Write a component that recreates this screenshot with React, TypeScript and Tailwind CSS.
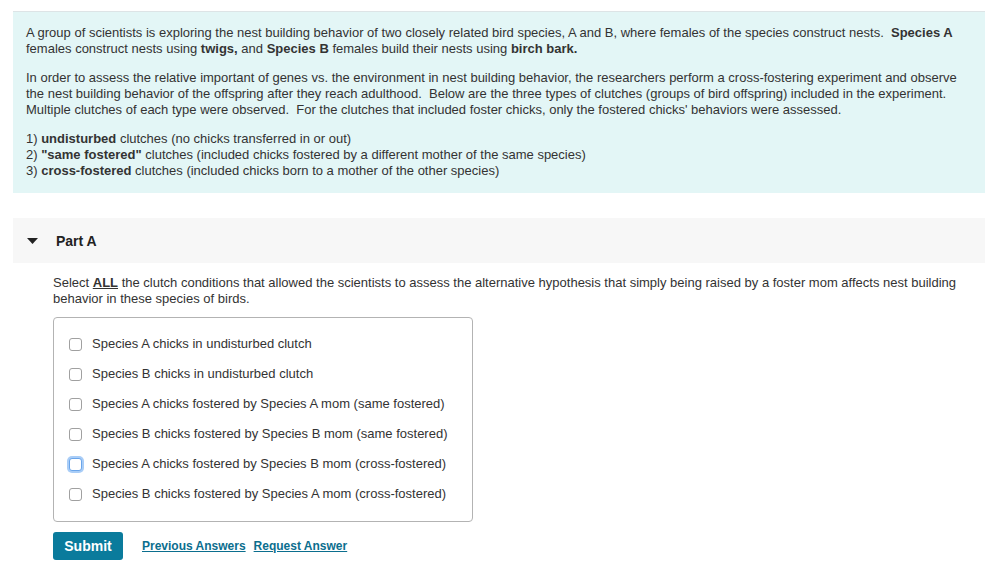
const OPTIONS = [
  'Species A chicks in undisturbed clutch',
  'Species B chicks in undisturbed clutch',
  'Species A chicks fostered by Species A mom (same fostered)',
  'Species B chicks fostered by Species B mom (same fostered)',
  'Species A chicks fostered by Species B mom (cross-fostered)',
  'Species B chicks fostered by Species A mom (cross-fostered)',
];

export default function App() {
  return (
    <div className="min-h-[568px] w-[1001px] bg-white text-[13px] leading-4 text-[#333] font-['Liberation_Sans',Arial,sans-serif]">
      <div className="pt-[11px] pl-[13px] w-[985px]">
        <section className="border-t border-[#dde4e6] bg-[#e3f6f6] px-[13px] pt-[13px] pb-[14px]">
          <p>
            A group of scientists is exploring the nest building behavior of two closely related bird species, A and B, where females of the species construct nests.&nbsp; <b>Species A</b> females construct nests using <b>twigs,</b> and <b>Species B</b> females build their nests using <b>birch bark.</b>
          </p>
          <p className="mt-[13px]">
            In order to assess the relative important of genes vs. the environment in nest building behavior, the researchers perform a cross-fostering experiment and observe the nest building behavior of the offspring after they reach adulthood.&nbsp; Below are the three types of clutches (groups of bird offspring) included in the experiment. Multiple clutches of each type were observed.&nbsp; For the clutches that included foster chicks, only the fostered chicks' behaviors were assessed.
          </p>
          <p className="mt-[13px]">
            1) <b>undisturbed</b> clutches (no chicks transferred in or out)
            <br />
            2) <b>"same fostered"</b> clutches (included chicks fostered by a different mother of the same species)
            <br />
            3) <b>cross-fostered</b> clutches (included chicks born to a mother of the other species)
          </p>
        </section>

        <div className="mt-[25px] flex h-[45px] items-center bg-[#f7f7f7] pl-[14px]">
          <svg width="11" height="6" viewBox="0 0 11 6" className="mt-px">
            <polygon points="0,0 11,0 5.5,6" fill="#222" />
          </svg>
          <span className="ml-[18px] text-[14px] font-bold text-[#222]">Part A</span>
        </div>

        <div className="pl-[40px] pt-[12px]">
          <p>
            Select <b className="underline">ALL</b> the clutch conditions that allowed the scientists to assess the alternative hypothesis that simply being raised by a foster mom affects nest building behavior in these species of birds.
          </p>

          <div className="mt-[10px] w-[420px] rounded-[4px] border border-[#b3b3b3] px-[15px] pt-[11px] pb-[12px]">
            {OPTIONS.map((label, i) => (
              <label key={label} className="flex h-[30px] items-center">
                <span
                  className={`h-[13px] w-[13px] shrink-0 rounded-[3px] border bg-white ${
                    i === 4
                      ? 'border-[#6aa5ea] shadow-[0_0_0_2px_#a9cdf7]'
                      : 'border-[#a0a0a0]'
                  }`}
                />
                <span className="ml-[10px]">{label}</span>
              </label>
            ))}
          </div>

          <div className="mt-[10px] flex items-center">
            <button className="h-[28px] w-[70px] rounded-[3px] bg-[#0a7b9c] text-[14px] font-bold text-white">
              Submit
            </button>
            <a href="#" className="ml-[19px] text-[12px] font-bold text-[#0b6e8e] underline">
              Previous Answers
            </a>
            <a href="#" className="ml-[8px] text-[12px] font-bold text-[#0b6e8e] underline">
              Request Answer
            </a>
          </div>
        </div>
      </div>
    </div>
  );
}
